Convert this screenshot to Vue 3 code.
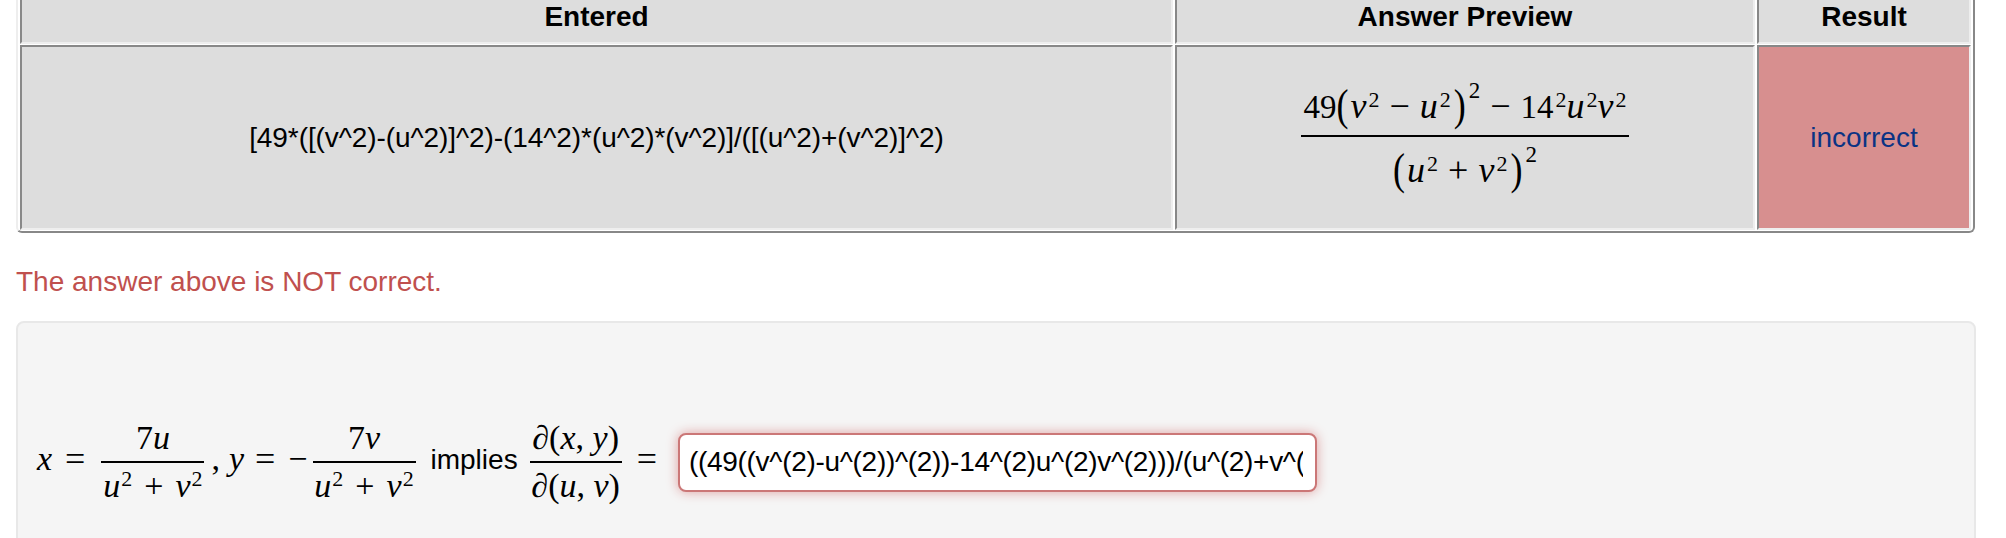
<script setup>
const entered = '[49*([(v^2)-(u^2)]^2)-(14^2)*(u^2)*(v^2)]/([(u^2)+(v^2)]^2)'
const answer = '((49((v^(2)-u^(2))^(2))-14^(2)u^(2)v^(2)))/(u^(2)+v^(2))^(2)'
</script>

<template>
  <div class="page">
    <table class="results">
      <colgroup>
        <col class="col-entered" />
        <col class="col-preview" />
        <col class="col-result" />
      </colgroup>
      <thead>
        <tr>
          <th>Entered</th>
          <th>Answer Preview</th>
          <th>Result</th>
        </tr>
      </thead>
      <tbody>
        <tr>
          <td class="entered">{{ entered }}</td>
          <td>
            <div class="frac frac-lg math">
              <div class="num"><span class="r">49</span><span class="paren pl">(</span><i>v</i><span class="sup">2</span><span class="op">−</span><i>u</i><span class="sup">2</span><span class="paren pr">)</span><span class="sup sup-hi">2</span><span class="op">−</span><span class="r">14</span><span class="sup">2</span><i>u</i><span class="sup">2</span><i>v</i><span class="sup">2</span></div>
              <div class="den"><span class="paren pl">(</span><i>u</i><span class="sup">2</span><span class="op">+</span><i>v</i><span class="sup">2</span><span class="paren pr">)</span><span class="sup sup-hi">2</span></div>
            </div>
          </td>
          <td class="incorrect">incorrect</td>
        </tr>
      </tbody>
    </table>

    <p class="message">The answer above is NOT correct.</p>

    <div class="well">
      <div class="problem">
        <span class="math tx"><i>x</i></span>
        <span class="math tx rel">=</span>
        <div class="frac math">
          <div class="num">7<i>u</i></div>
          <div class="den"><i>u</i><span class="sup">2</span><span class="op">+</span><i>v</i><span class="sup">2</span></div>
        </div>
        <span class="math tx comma">,</span>
        <span class="math tx var-y"><i>y</i></span>
        <span class="math tx rel">=</span>
        <span class="math tx">−</span>
        <div class="frac math minus-frac">
          <div class="num">7<i>v</i></div>
          <div class="den"><i>u</i><span class="sup">2</span><span class="op">+</span><i>v</i><span class="sup">2</span></div>
        </div>
        <span class="implies">implies</span>
        <div class="frac math frac-d">
          <div class="num">∂(<i>x</i>, <i>y</i>)</div>
          <div class="den">∂(<i>u</i>, <i>v</i>)</div>
        </div>
        <span class="math tx rel rel-last">=</span>
        <input class="answer" type="text" :value="answer" />
      </div>
    </div>
  </div>
</template>

<style scoped>
.page { width: 2006px; height: 538px; overflow: hidden; font-family: "Liberation Sans", Arial, sans-serif; font-size: 28px; color: #000; }

.results { width: 1959px; margin: -3px 0 0 16px; table-layout: fixed; border-collapse: separate; border-spacing: 2px 1px; border-right: 2px solid #888; border-bottom: 2px solid #888; border-left: 2px solid #eee; border-radius: 0 0 6px 6px; }
.col-entered { width: 1153px; }
.col-preview { width: 580px; }
.col-result { width: 214px; }
.results th, .results td { box-sizing: border-box; background: #ddd; border-style: solid; border-width: 2px; border-color: #888 #eee #eee #888; text-align: center; padding: 0; }
.results th { height: 46px; padding-bottom: 8px; font-weight: bold; }
.results td { height: 185px; }
.results td.entered { padding-top: 1px; letter-spacing: -0.08px; }
.results td.incorrect { padding-top: 1px; background: #d78f8f; color: #0a3384; }

.message { margin: 29px 0 19px 16px; line-height: 40px; color: #c0504e; }

.well { box-sizing: border-box; width: 1960px; margin-left: 16px; padding: 99px 0 100px 19px; background: #f5f5f5; border: 2px solid #e8e8e8; border-radius: 8px; }
.problem { display: flex; align-items: center; }

.math { font-family: "Liberation Serif", "Times New Roman", serif; font-size: 34px; line-height: 32px; }
.tx { margin-bottom: 6px; }
.rel { margin-left: 13px; margin-right: 13px; font-size: 36px; }
.rel-last { margin-left: 15px; margin-right: 21px; }
.comma { margin-left: 7px; margin-right: 9px; }
.var-y { margin-right: -2px; }
.implies { margin: 0 12px 4px 15px; }

.frac { flex: none; width: 103px; margin-left: 3px; text-align: center; white-space: nowrap; }
.frac > .num { padding-bottom: 7px; }
.frac > .den { padding-top: 7px; border-top: 2px solid #000; }
.minus-frac { margin-left: 5px; }
.frac-d { width: 92px; margin-left: 0; }
.op { margin: 0 12px; }
.sup { font-size: 22px; line-height: 0; vertical-align: 11px; margin-left: 1px; }
.r { font-size: 33px; }

.frac-lg { width: 328px; margin: 0 auto; font-size: 36px; }
.frac-lg > .num { padding: 17px 0 12px; }
.frac-lg > .den { padding: 17px 0 16px; }
.frac-lg .sup { margin-left: 2px; }
.frac-lg .sup-hi { font-size: 23px; vertical-align: 20px; margin-left: 3px; }
.frac-lg .num .op { margin: 0 10px; }
.frac-lg .den .op { margin: 0 10px; }
.paren { display: inline-block; transform: scale(1, 1.25); transform-origin: center 60%; }
.pl { margin-right: 2px; }
.pr { margin-left: 3px; }

.answer { box-sizing: border-box; flex: none; width: 639px; height: 59px; padding: 0 12px 0 9px; font-family: "Liberation Sans", Arial, sans-serif; font-size: 28px; letter-spacing: -0.3px; color: #000; background: #fff; border: 2px solid #cb7777; border-radius: 8px; box-shadow: 0 0 12px #dfa0a0; outline: none; }
</style>

<style>
body { background: #fff; }
</style>
